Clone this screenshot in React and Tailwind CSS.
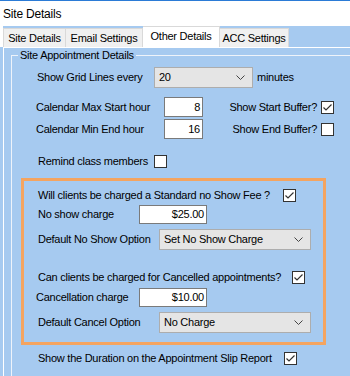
import React from "react";

const Chevron = () => (
  <svg width="9" height="5" viewBox="0 0 9 5" className="shrink-0">
    <path d="M0.5 0.5 L4.5 4.5 L8.5 0.5" fill="none" stroke="#444" strokeWidth="1" />
  </svg>
);

const Check = ({ checked }) => (
  <div className="w-[13px] h-[13px] border border-[#333] bg-white shrink-0 flex items-center justify-center">
    {checked && (
      <svg width="11" height="11" viewBox="0 0 11 11">
        <path d="M1.5 5.5 L4 8 L9.5 2.5" fill="none" stroke="#333" strokeWidth="1.2" />
      </svg>
    )}
  </div>
);

const Select = ({ value, w }) => (
  <div className={`h-[21px] ${w} bg-[#e5e5e5] border border-[#adadad] flex items-center justify-between pl-[4px] pr-[7px] shrink-0`}>
    <span>{value}</span>
    <Chevron />
  </div>
);

const Input = ({ value, w, h }) => (
  <div className={`${h} ${w} bg-white border border-[#7a7a7a] flex items-center justify-end pr-[2px] shrink-0`}>
    {value}
  </div>
);

export default function App() {
  return (
    <div
      className="w-[350px] h-[376px] overflow-hidden bg-[#a6caf0] text-[11px] tracking-[-0.25px] text-black leading-none whitespace-nowrap"
      style={{ fontFamily: '"Liberation Sans", Arial, sans-serif' }}
    >
      {/* title */}
      <div className="h-[26px] bg-white border-t border-[#2b7bd6] flex items-center pl-[3px] text-[12px] tracking-[-0.2px]">
        Site Details
      </div>
      {/* tabs */}
      <div className="h-[21px] flex items-end">
        <div className="w-[3px] h-full bg-white" />
        <div className="h-[19px] w-[63px] bg-[#f0f0f0] border border-b-0 border-[#d9d9d9] flex items-center justify-center">Site Details</div>
        <div className="h-[19px] w-[77px] bg-[#f0f0f0] border border-b-0 border-l-0 border-[#d9d9d9] flex items-center justify-center">Email Settings</div>
        <div className="h-[21px] w-[77px] bg-white border border-b-0 border-l-0 border-[#d9d9d9] flex items-start pt-[4px] justify-center">Other Details</div>
        <div className="h-[19px] w-[69px] bg-[#f0f0f0] border border-b-0 border-l-0 border-[#d9d9d9] flex items-center justify-center">ACC Settings</div>
      </div>
      {/* tab page */}
      <div className="ml-[3px] border-l border-t border-white h-[400px] pt-[7px] pl-[7px]">
        <div className="relative border-l border-t border-[#eef3fa] h-[400px]">
          <div className="absolute left-[6px] top-[-6px] bg-[#a6caf0] px-[2px]">Site Appointment Details</div>

          {/* grid lines row */}
          <div className="mt-[11px] ml-[25px] h-[21px] flex items-center">
            <div className="w-[117px]">Show Grid Lines every</div>
            <Select value="20" w="w-[99px]" />
            <div className="ml-[4px]">minutes</div>
          </div>

          {/* max start */}
          <div className="mt-[9px] ml-[24px] h-[20px] flex items-center">
            <div className="w-[128px]">Calendar Max Start hour</div>
            <Input value="8" w="w-[39px]" h="h-[20px]" />
            <div className="w-[114px] text-right">Show Start Buffer?</div>
            <div className="ml-[4px]"><Check checked /></div>
          </div>

          {/* min end */}
          <div className="mt-[2px] ml-[24px] h-[20px] flex items-center">
            <div className="w-[128px]">Calendar Min End hour</div>
            <Input value="16" w="w-[39px]" h="h-[20px]" />
            <div className="w-[114px] text-right">Show End Buffer?</div>
            <div className="ml-[4px]"><Check /></div>
          </div>

          {/* remind */}
          <div className="mt-[15px] ml-[26px] h-[14px] flex items-center">
            <div className="w-[116px]">Remind class members</div>
            <Check />
          </div>

          {/* orange box */}
          <div className="mt-[10px] ml-[9px] w-[305px] h-[167px] border-[3px] border-[#f4a460]">
            <div className="mt-[8px] ml-[14px] h-[13px] flex items-center">
              <div className="w-[245px]">Will clients be charged a Standard no Show Fee ?</div>
              <Check checked />
            </div>
            <div className="mt-[3px] ml-[14px] h-[19px] flex items-center">
              <div className="w-[101px]">No show charge</div>
              <Input value="$25.00" w="w-[68px]" h="h-[19px]" />
            </div>
            <div className="mt-[5px] ml-[14px] h-[21px] flex items-center">
              <div className="w-[121px]">Default No Show Option</div>
              <Select value="Set No Show Charge" w="w-[152px]" />
            </div>
            <div className="mt-[21px] ml-[14px] h-[13px] flex items-center">
              <div className="w-[254px]">Can clients be charged for Cancelled appointments?</div>
              <Check checked />
            </div>
            <div className="mt-[4px] ml-[12px] h-[19px] flex items-center">
              <div className="w-[103px]">Cancellation charge</div>
              <Input value="$10.00" w="w-[68px]" h="h-[19px]" />
            </div>
            <div className="mt-[5px] ml-[14px] h-[21px] flex items-center">
              <div className="w-[121px]">Default Cancel Option</div>
              <Select value="No Charge" w="w-[152px]" />
            </div>
          </div>

          {/* last row */}
          <div className="mt-[7px] ml-[26px] h-[13px] flex items-center">
            <div className="w-[246px]">Show the Duration on the Appointment Slip Report</div>
            <Check checked />
          </div>
        </div>
      </div>
    </div>
  );
}
